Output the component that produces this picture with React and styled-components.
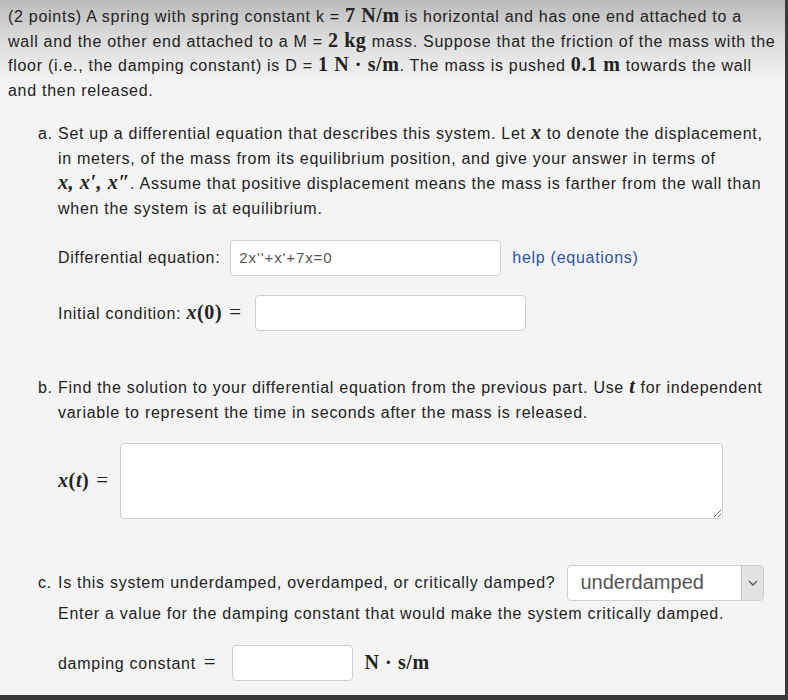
import React from "react";
import styled, { createGlobalStyle } from "styled-components";

const Global = createGlobalStyle`
  html, body { margin: 0; padding: 0; background: #3a3a3a; }
  * { box-sizing: border-box; }
`;

const Frame = styled.div`
  width: 788px;
  height: 700px;
  background: #3a3a3a;
  overflow: hidden;
`;

const Page = styled.div`
  width: 785px;
  height: 695px;
  background: linear-gradient(to bottom, #bcbcbc 0px, #dcdcdc 40px, #f2f2f2 80px, #f4f4f4 100px);
  font-family: "Liberation Sans", Arial, sans-serif;
  font-size: 16px;
  letter-spacing: 0.72px;
  color: #222;
  padding: 5px 0 0 8px;
`;

const Intro = styled.p`
  margin: 0;
  line-height: 24.7px;
  white-space: nowrap;
`;

const Part = styled.div`
  display: flex;
  margin-top: ${(p) => p.$top}px;
  padding-left: 30px;
`;

const Letter = styled.span`
  width: 20px;
  line-height: ${(p) => p.$lh || 25}px;
  flex-shrink: 0;
`;

const Body = styled.div`
  display: flex;
  flex-direction: column;
`;

const Text = styled.p`
  margin: 0;
  line-height: 25px;
  height: 25px;
  white-space: nowrap;
`;

const M = styled.span`
  font-family: "Liberation Serif", "DejaVu Serif", serif;
  font-weight: bold;
  font-size: 20px;
  line-height: 1;
  letter-spacing: 0.6px;
`;

const MI = styled.span`
  font-family: "Liberation Serif", "DejaVu Serif", serif;
  font-weight: bold;
  font-style: italic;
  font-size: 20px;
  line-height: 1;
  letter-spacing: 0.6px;
`;

const Eq = styled.span`
  font-family: "Liberation Serif", "DejaVu Serif", serif;
  font-size: 21px;
  line-height: 1;
  margin: 0 ${(p) => p.$m || 7}px;
`;

const Row = styled.div`
  display: flex;
  align-items: center;
  margin-top: ${(p) => p.$top}px;
  height: ${(p) => p.$h || 36}px;
`;

const Label = styled.span`
  margin-right: ${(p) => p.$gap || 8}px;
  white-space: nowrap;
`;

const Input = styled.input`
  width: ${(p) => p.$w}px;
  height: 36px;
  border: 1px solid #cfcfcf;
  border-radius: 4px;
  background: #fff;
  padding: 0 8px;
  font-family: "Liberation Sans", Arial, sans-serif;
  font-size: 15px;
  letter-spacing: 0.9px;
  color: #555;
  outline: none;
`;

const Area = styled.textarea`
  width: 603px;
  height: 76px;
  border: 1px solid #cfcfcf;
  border-radius: 4px;
  background: #fff;
  resize: both;
  outline: none;
`;

const Help = styled.a`
  color: #2b55a6;
  text-decoration: none;
  margin-left: 11px;
  cursor: pointer;
`;

const Select = styled.div`
  display: flex;
  width: 197px;
  height: 36px;
  border: 1px solid #cfcfcf;
  border-radius: 4px;
  background: #fff;
  margin-left: 4px;
  overflow: hidden;
`;

const SelectValue = styled.span`
  flex: 1;
  display: flex;
  align-items: center;
  padding-left: 12px;
  font-size: 20px;
  letter-spacing: 0;
  color: #555;
`;

const Chevron = styled.span`
  width: 22px;
  display: flex;
  align-items: center;
  justify-content: center;
  background: #e2e2e2;
  border-left: 1px solid #c8c8c8;
`;

const Unit = styled.span`
  margin-left: 11px;
`;

export default function App() {
  return (
    <Frame>
      <Global />
      <Page>
        <Intro>
          (2 points) A spring with spring constant k = <M>7 N/m</M> is horizontal and has one end attached to a
          <br />
          wall and the other end attached to a M = <M>2 kg</M> mass. Suppose that the friction of the mass with the
          <br />
          floor (i.e., the damping constant) is D = <M>1 N · s/m</M>. The mass is pushed <M>0.1 m</M> towards the wall
          <br />
          and then released.
        </Intro>

        <Part $top={17}>
          <Letter>a.</Letter>
          <Body>
            <Text>
              Set up a differential equation that describes this system. Let <MI>x</MI> to denote the displacement,
            </Text>
            <Text>in meters, of the mass from its equilibrium position, and give your answer in terms of</Text>
            <Text>
              <MI>x, x′, x″</MI>. Assume that positive displacement means the mass is farther from the wall than
            </Text>
            <Text>when the system is at equilibrium.</Text>
            <Row $top={19}>
              <Label $gap={10}>Differential equation:</Label>
              <Input $w={271} defaultValue={"2x''+x'+7x=0"} />
              <Help>help (equations)</Help>
            </Row>
            <Row $top={19}>
              <Label $gap={6}>
                Initial condition: <MI>x</MI>
                <M>(0)</M>
                <Eq>=</Eq>
              </Label>
              <Input $w={271} />
            </Row>
          </Body>
        </Part>

        <Part $top={44}>
          <Letter>b.</Letter>
          <Body>
            <Text>
              Find the solution to your differential equation from the previous part. Use <MI>t</MI> for independent
            </Text>
            <Text>variable to represent the time in seconds after the mass is released.</Text>
            <Row $top={18} $h={76}>
              <Label $gap={4}>
                <MI>x</MI>
                <M>(</M>
                <MI>t</MI>
                <M>)</M>
                <Eq>=</Eq>
              </Label>
              <Area />
            </Row>
          </Body>
        </Part>

        <Part $top={46}>
          <Letter $lh={36}>c.</Letter>
          <Body>
            <Row $top={0}>
              <Label $gap={0}>Is this system underdamped, overdamped, or critically damped?</Label>
              <Select>
                <SelectValue>underdamped</SelectValue>
                <Chevron>
                  <svg width="10" height="6" viewBox="0 0 10 6">
                    <path d="M1 1 L5 5 L9 1" fill="none" stroke="#555" strokeWidth="1.3" />
                  </svg>
                </Chevron>
              </Select>
            </Row>
            <Text>Enter a value for the damping constant that would make the system critically damped.</Text>
            <Row $top={19}>
              <Label $gap={8}>
                damping constant<Eq $m={8}>=</Eq>
              </Label>
              <Input $w={121} />
              <Unit>
                <M>N · s/m</M>
              </Unit>
            </Row>
          </Body>
        </Part>
      </Page>
    </Frame>
  );
}
